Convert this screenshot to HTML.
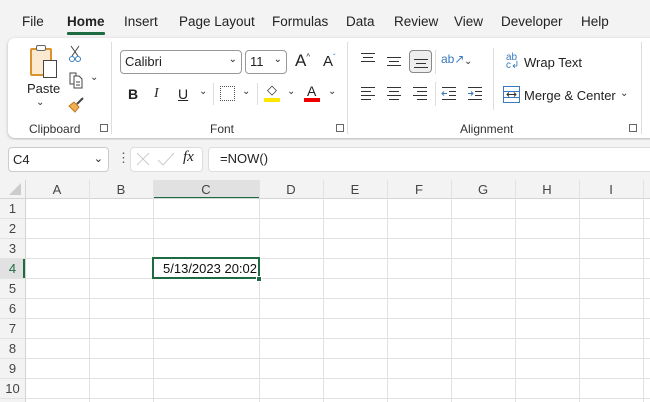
<!DOCTYPE html>
<html><head><style>
*{margin:0;padding:0;box-sizing:border-box}
body{width:650px;height:402px;overflow:hidden;background:#f3f3f3;font-family:"Liberation Sans",sans-serif;position:relative;color:#222}
.a{position:absolute}
.t{font-size:13.5px;top:14px}
.card{left:8px;top:38px;width:650px;height:100px;background:#fff;border-radius:7px;box-shadow:0 1px 3px rgba(0,0,0,.25)}
.lbl{font-size:12px;top:122px;color:#333}
.sep{width:1px;background:#ddd}
.box{border:1px solid #999;border-radius:4px;background:#fff;font-size:13px;padding:3px 4px}
.ln{height:1px;background:#e2e2e2;left:0;width:650px}
.vl{width:1px;background:#e2e2e2;top:180px;height:222px}
.ch{top:180px;height:19px;font-size:13px;color:#444;text-align:center;line-height:19px}
.rh{left:0;width:25px;font-size:13px;color:#444;text-align:center;height:20px;line-height:20px}
.ic{font-size:13px;color:#333}
svg{position:absolute}
</style></head><body>
<div class="a t" style="left:22px">File</div>
<div class="a t" style="left:67px;font-weight:bold;color:#222">Home</div>
<div class="a" style="left:67px;top:32px;width:38px;height:3px;background:#1e6b41;border-radius:1px"></div>
<div class="a t" style="left:124px">Insert</div>
<div class="a t" style="left:179px">Page Layout</div>
<div class="a t" style="left:272px">Formulas</div>
<div class="a t" style="left:346px">Data</div>
<div class="a t" style="left:394px">Review</div>
<div class="a t" style="left:454px">View</div>
<div class="a t" style="left:501px">Developer</div>
<div class="a t" style="left:581px">Help</div>

<div class="a card"></div>
<!-- clipboard -->
<div class="a" style="left:30px;top:48px;width:22px;height:28px;border:2px solid #d9922e;border-radius:2px;background:#fbe9d0"></div>
<div class="a" style="left:36px;top:45px;width:10px;height:6px;border:1.5px solid #666;border-radius:2px;background:#fff"></div>
<div class="a" style="left:43px;top:60px;width:14px;height:18px;border:1.5px solid #444;background:#fff"></div>
<div class="a" style="left:27px;top:81px;font-size:13px">Paste</div>
<div class="a ic" style="left:36px;top:97px;font-size:10px">⌄</div>
<svg style="left:68px;top:45px" width="14" height="18"><path d="M3 1 L10 11 M11 1 L4 11" stroke="#444" fill="none"/><circle cx="4" cy="14" r="2.5" stroke="#3a7bbf" fill="none"/><circle cx="10" cy="14" r="2.5" stroke="#3a7bbf" fill="none"/></svg>
<svg style="left:67px;top:71px" width="18" height="18"><path d="M3 2 H9 V13 H3 Z" stroke="#444" fill="none"/><path d="M7 5 H12 L15 8 V17 H7 Z" stroke="#444" fill="#fff"/><path d="M9 11 H13 M9 14 H13" stroke="#444"/></svg>
<div class="a ic" style="left:90px;top:72px;font-size:10px">⌄</div>
<svg style="left:67px;top:96px" width="18" height="18"><path d="M2 10 L8 16 L12 11 L7 6 Z" fill="#f0b050" stroke="#c07820"/><path d="M10 8 L16 2" stroke="#444" stroke-width="2"/></svg>
<div class="a lbl" style="left:29px">Clipboard</div>
<div class="a" style="left:100px;top:124px;width:8px;height:8px;border:1px solid #666"></div>
<div class="a sep" style="left:111px;top:42px;height:92px"></div>
<!-- font -->
<div class="a box" style="left:120px;top:50px;width:122px;height:24px">Calibri<span style="position:absolute;right:4px;font-size:10px">⌄</span></div>
<div class="a box" style="left:245px;top:50px;width:42px;height:24px">11<span style="position:absolute;right:4px;font-size:10px">⌄</span></div>
<div class="a" style="left:295px;top:51px;font-size:17px">A<sup style="font-size:8px">^</sup></div>
<div class="a" style="left:323px;top:53px;font-size:15px">A<sup style="font-size:8px;color:#3a7bbf">ˇ</sup></div>
<div class="a" style="left:128px;top:86px;font-size:14px;font-weight:bold">B</div>
<div class="a" style="left:154px;top:86px;font-size:14px;font-style:italic;font-family:'Liberation Serif'">I</div>
<div class="a" style="left:178px;top:86px;font-size:14px;text-decoration:underline">U</div>
<div class="a ic" style="left:199px;top:86px;font-size:10px">⌄</div>
<div class="a sep" style="left:213px;top:83px;height:22px"></div>
<div class="a" style="left:220px;top:86px;width:15px;height:15px;border:1px dotted #555"></div>
<div class="a ic" style="left:242px;top:86px;font-size:10px">⌄</div>
<div class="a sep" style="left:257px;top:83px;height:22px"></div>
<div class="a ic" style="left:267px;top:82px;font-size:13px">◇</div>
<div class="a" style="left:264px;top:98px;width:16px;height:4px;background:#ffe600"></div>
<div class="a ic" style="left:287px;top:86px;font-size:10px">⌄</div>
<div class="a" style="left:307px;top:83px;font-size:14px">A</div>
<div class="a" style="left:304px;top:98px;width:16px;height:4px;background:#e00"></div>
<div class="a ic" style="left:328px;top:86px;font-size:10px">⌄</div>
<div class="a lbl" style="left:210px">Font</div>
<div class="a" style="left:336px;top:124px;width:8px;height:8px;border:1px solid #666"></div>
<div class="a sep" style="left:347px;top:42px;height:92px"></div>
<!-- alignment -->
<svg style="left:360px;top:52px" width="16" height="14"><path d="M1 1.5H15M3 5.5H13M1 9.5H15" stroke="#333"/></svg>
<svg style="left:386px;top:56px" width="16" height="14"><path d="M1 1.5H15M3 5.5H13M1 9.5H15" stroke="#333"/></svg>
<div class="a" style="left:409px;top:50px;width:23px;height:23px;border:1px solid #888;border-radius:4px;background:#eee"></div>
<svg style="left:413px;top:58px" width="16" height="14"><path d="M1 1.5H15M3 5.5H13M1 9.5H15" stroke="#333"/></svg>
<div class="a sep" style="left:435px;top:50px;height:24px"></div>
<div class="a" style="left:441px;top:52px;font-size:12px;color:#3a7bbf">ab↗</div>
<div class="a ic" style="left:464px;top:56px;font-size:10px">⌄</div>
<svg style="left:360px;top:86px" width="16" height="16"><path d="M1 1.5H15M1 5.5H11M1 9.5H15M1 13.5H11" stroke="#333"/></svg>
<svg style="left:386px;top:86px" width="16" height="16"><path d="M1 1.5H15M3 5.5H13M1 9.5H15M3 13.5H13" stroke="#333"/></svg>
<svg style="left:412px;top:86px" width="16" height="16"><path d="M1 1.5H15M5 5.5H15M1 9.5H15M5 13.5H15" stroke="#333"/></svg>
<div class="a sep" style="left:435px;top:82px;height:24px"></div>
<svg style="left:441px;top:86px" width="16" height="16"><path d="M1 1.5H15M8 5.5H15M8 9.5H15M1 13.5H15" stroke="#333"/><path d="M6 7.5H1M3 5.5L1 7.5L3 9.5" stroke="#3a7bbf" fill="none"/></svg>
<svg style="left:467px;top:86px" width="16" height="16"><path d="M1 1.5H15M8 5.5H15M8 9.5H15M1 13.5H15" stroke="#333"/><path d="M1 7.5H6M4 5.5L6 7.5L4 9.5" stroke="#3a7bbf" fill="none"/></svg>
<div class="a sep" style="left:493px;top:48px;height:62px"></div>
<div class="a" style="left:506px;top:54px;font-size:10px;color:#3a7bbf;line-height:8px">ab<br>c↲</div>
<div class="a" style="left:524px;top:55px;font-size:13px">Wrap Text</div>
<svg style="left:503px;top:86px" width="17" height="17"><rect x="0.5" y="0.5" width="16" height="16" fill="none" stroke="#3a7bbf"/><path d="M0.5 5.5H16.5M0.5 11.5H16.5" stroke="#3a7bbf"/><path d="M4 8.5H13M6 6.5L4 8.5L6 10.5M11 6.5L13 8.5L11 10.5" stroke="#333" fill="none"/></svg>
<div class="a" style="left:524px;top:88px;font-size:13px">Merge &amp; Center</div>
<div class="a ic" style="left:620px;top:88px;font-size:10px">⌄</div>
<div class="a lbl" style="left:460px">Alignment</div>
<div class="a" style="left:629px;top:124px;width:8px;height:8px;border:1px solid #666"></div>
<div class="a sep" style="left:641px;top:42px;height:92px"></div>

<!-- formula bar -->
<div class="a" style="left:0;top:140px;width:650px;height:40px;background:#f3f3f3"></div>
<div class="a box" style="left:8px;top:147px;width:101px;height:25px;border-color:#ccc;font-size:13px;line-height:17px">C4<span style="position:absolute;right:5px;font-size:11px">⌄</span></div>
<div class="a" style="left:117px;top:150px;font-size:13px;color:#555">⋮</div>
<div class="a" style="left:130px;top:147px;width:73px;height:25px;background:#fff;border:1px solid #ddd;border-radius:4px"></div>
<svg style="left:136px;top:152px" width="40" height="14"><path d="M1 1L13 13M13 1L1 13M22 8L27 13L38 1" stroke="#ccc" fill="none"/></svg>
<div class="a" style="left:183px;top:149px;font-size:15px;font-style:italic;font-family:'Liberation Serif'">fx</div>
<div class="a" style="left:208px;top:147px;width:450px;height:25px;background:#fff;border:1px solid #ddd;border-radius:4px"></div>
<div class="a" style="left:220px;top:151px;font-size:13px">=NOW()</div>

<!-- grid -->
<div class="a" style="left:0;top:180px;width:650px;height:222px;background:#fff"></div>
<div class="a" style="left:0;top:180px;width:650px;height:19px;background:#f3f3f3"></div>
<div class="a" style="left:0;top:199px;width:25px;height:203px;background:#f3f3f3"></div>
<div class="a" style="left:153px;top:180px;width:106px;height:19px;background:#e1e1e1"></div>
<div class="a" style="left:153px;top:197px;width:106px;height:2px;background:#1e6b41"></div>
<div class="a" style="left:0;top:258px;width:25px;height:20px;background:#e1e1e1"></div>
<div class="a" style="left:23px;top:258px;width:2px;height:20px;background:#1e6b41"></div>
<div class="a" style="left:9px;top:183px;width:0;height:0;border-left:12px solid transparent;border-bottom:12px solid #ccc"></div>
<div class="a ln" style="top:198px;background:#d4d4d4"></div>
<div class="a ln" style="top:218px"></div><div class="a ln" style="top:238px"></div>
<div class="a ln" style="top:258px"></div><div class="a ln" style="top:278px"></div>
<div class="a ln" style="top:298px"></div><div class="a ln" style="top:318px"></div>
<div class="a ln" style="top:338px"></div><div class="a ln" style="top:358px"></div>
<div class="a ln" style="top:378px"></div><div class="a ln" style="top:398px"></div>
<div class="a vl" style="left:25px;background:#d4d4d4"></div>
<div class="a vl" style="left:89px"></div><div class="a vl" style="left:153px"></div>
<div class="a vl" style="left:259px"></div><div class="a vl" style="left:323px"></div>
<div class="a vl" style="left:387px"></div><div class="a vl" style="left:451px"></div>
<div class="a vl" style="left:515px"></div><div class="a vl" style="left:579px"></div>
<div class="a vl" style="left:643px"></div>
<div class="a ch" style="left:25px;width:64px">A</div>
<div class="a ch" style="left:89px;width:64px">B</div>
<div class="a ch" style="left:153px;width:106px">C</div>
<div class="a ch" style="left:259px;width:64px">D</div>
<div class="a ch" style="left:323px;width:64px">E</div>
<div class="a ch" style="left:387px;width:64px">F</div>
<div class="a ch" style="left:451px;width:64px">G</div>
<div class="a ch" style="left:515px;width:64px">H</div>
<div class="a ch" style="left:579px;width:64px">I</div>
<div class="a rh" style="top:199px">1</div><div class="a rh" style="top:219px">2</div>
<div class="a rh" style="top:239px">3</div><div class="a rh" style="top:259px;color:#1e6b41">4</div>
<div class="a rh" style="top:279px">5</div><div class="a rh" style="top:299px">6</div>
<div class="a rh" style="top:319px">7</div><div class="a rh" style="top:339px">8</div>
<div class="a rh" style="top:359px">9</div><div class="a rh" style="top:379px">10</div>
<div class="a" style="left:152px;top:257px;width:108px;height:22px;border:2px solid #1e6b41"></div>
<div class="a" style="left:256px;top:276px;width:6px;height:6px;background:#1e6b41;border:1px solid #fff"></div>
<div class="a" style="left:155px;top:260px;width:102px;text-align:right;font-size:13px;line-height:17px;color:#111">5/13/2023 20:02</div>
</body></html>
